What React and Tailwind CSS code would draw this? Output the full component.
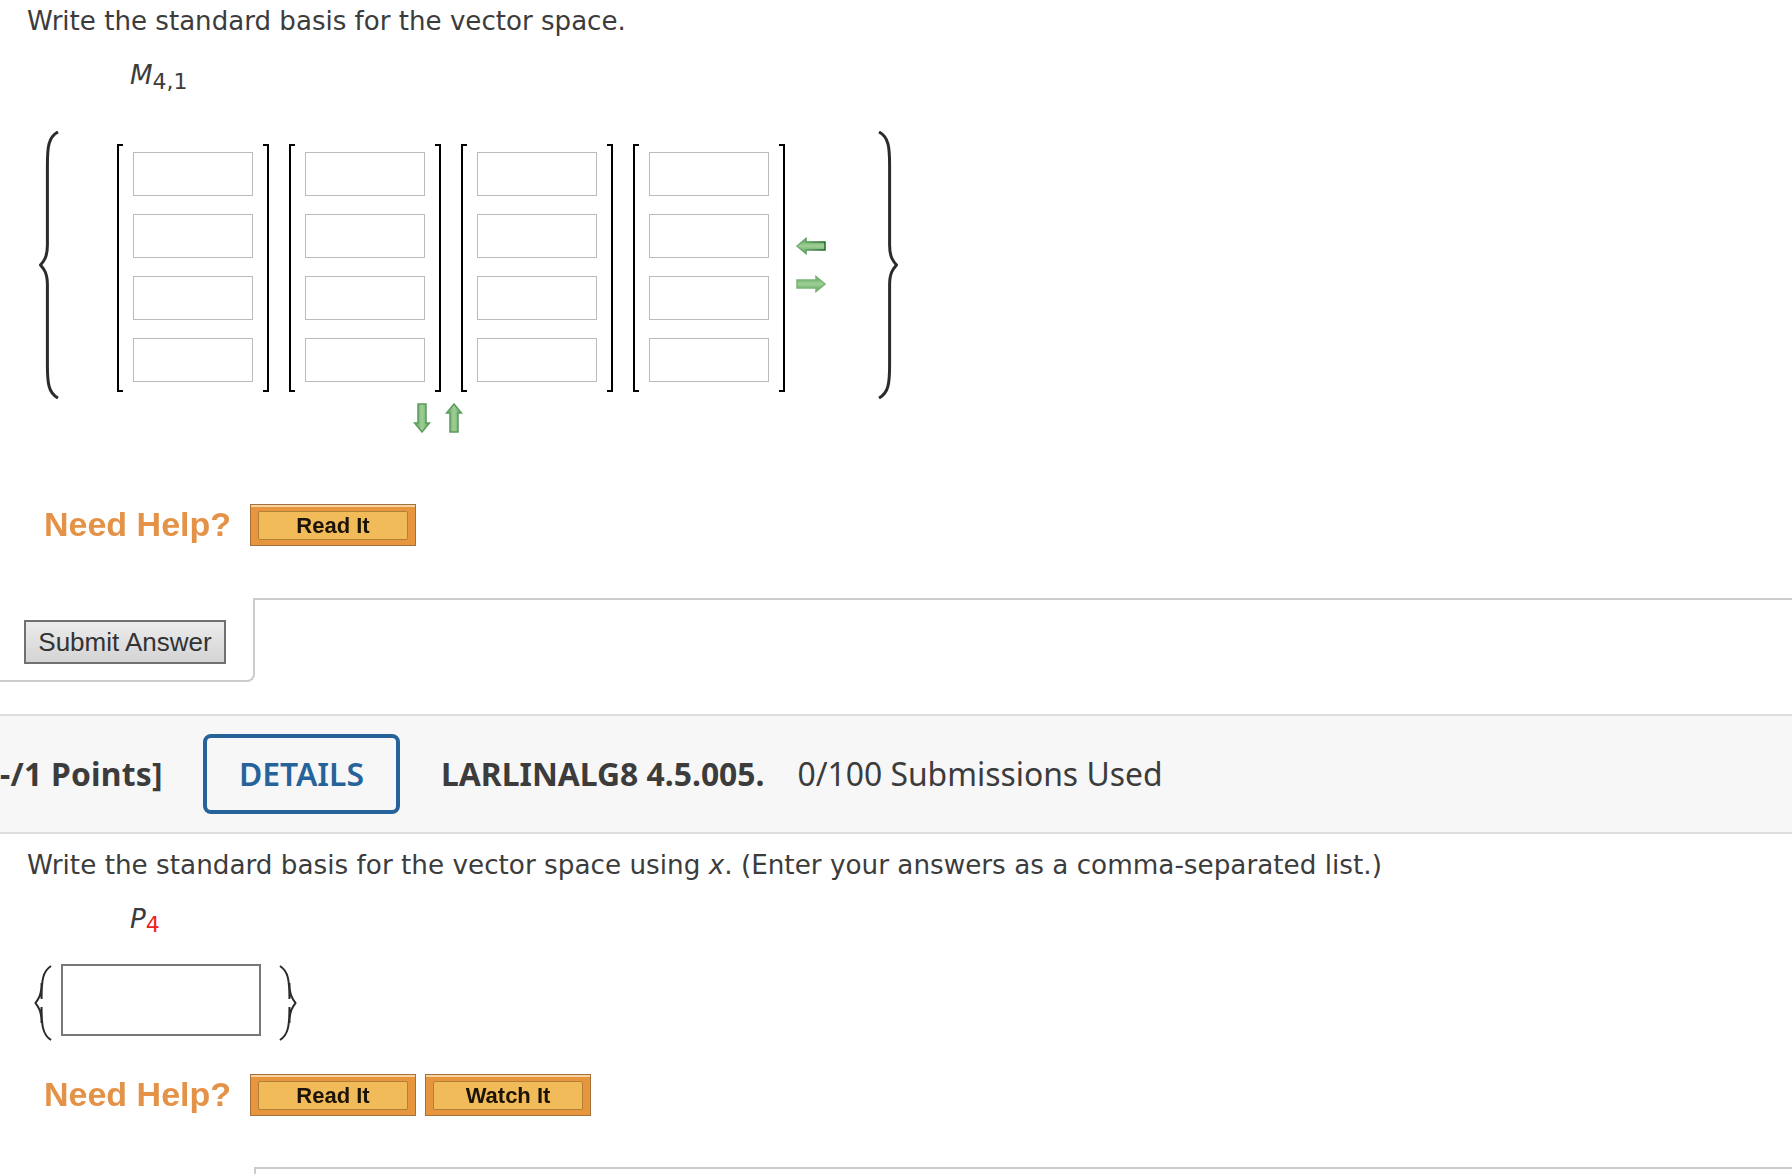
const TEXT = 'text-[#3c3c3c]'

function Brace({ side = 'left', w = 20, h = 268, sw = 3 }) {
  // drawn as a left brace, mirrored for the right one
  const mid = h / 2
  const x = w * 0.42
  const d = `M${w * 0.95} 1 C${x + 1} 6 ${x} 16 ${x} 34 L${x} ${mid - 20} C${x} ${mid - 8} ${w * 0.25} ${mid - 4} 1.5 ${mid} C${w * 0.25} ${mid + 4} ${x} ${mid + 8} ${x} ${mid + 20} L${x} ${h - 34} C${x} ${h - 16} ${x + 1} ${h - 6} ${w * 0.95} ${h - 1}`
  return (
    <svg width={w} height={h} viewBox={`0 0 ${w} ${h}`} fill="none" className={side === 'right' ? '-scale-x-100 shrink-0' : 'shrink-0'}>
      <path d={d} stroke="#2b2b2b" strokeWidth={sw} />
    </svg>
  )
}

function Matrix() {
  return (
    <div className="flex items-center w-[152px] shrink-0">
      <div className="w-[6px] h-[248px] border-l-[2px] border-y-[2px] border-black shrink-0" />
      <div className="flex flex-col gap-[18px] ml-[10px] mr-[10px] mb-[2px]">
        {[0, 1, 2, 3].map(i => (
          <div key={i} className="w-[120px] h-[44px] border border-[#bbbbbb] bg-white" />
        ))}
      </div>
      <div className="w-[6px] h-[248px] border-r-[2px] border-y-[2px] border-black shrink-0" />
    </div>
  )
}

function ArrowH({ dir }) {
  return (
    <svg width="30" height="18" viewBox="0 0 30 18" className={dir === 'left' ? 'blur-[0.4px]' : '-scale-x-100 blur-[0.4px]'}>
      <defs>
        <linearGradient id={`ah-fill-${dir}`} x1="0" y1="0" x2="0" y2="1">
          <stop offset="0" stopColor="#5fa05f" />
          <stop offset="0.5" stopColor="#9fd095" />
          <stop offset="1" stopColor="#5fa05f" />
        </linearGradient>
        <linearGradient id={`ah-line-${dir}`} x1="0" y1="0" x2="1" y2="0">
          <stop offset="0" stopColor="#78b575" />
          <stop offset="1" stopColor={dir === 'left' ? '#1f6a2c' : '#78b575'} />
        </linearGradient>
      </defs>
      <path d="M1 9 L10 1.5 L10 5 L29 5 L29 13 L10 13 L10 16.5 Z" fill={`url(#ah-fill-${dir})`} stroke={`url(#ah-line-${dir})`} strokeWidth="1.5" />
    </svg>
  )
}

function ArrowV({ dir }) {
  return (
    <svg width="18" height="30" viewBox="0 0 18 30" className={dir === 'up' ? 'blur-[0.4px]' : '-scale-y-100 blur-[0.4px]'}>
      <defs>
        <linearGradient id={`av-${dir}`} x1="0" y1="0" x2="1" y2="0">
          <stop offset="0" stopColor="#5fa05f" />
          <stop offset="0.5" stopColor="#9fd095" />
          <stop offset="1" stopColor="#5fa05f" />
        </linearGradient>
      </defs>
      <path d="M9 1 L16.5 10 L13 10 L13 29 L5 29 L5 10 L1.5 10 Z" fill={`url(#av-${dir})`} stroke="#5a9c5c" strokeWidth="1.5" />
    </svg>
  )
}

function HelpButton({ label }) {
  return (
    <div className="w-[166px] h-[42px] border border-[#a5713a] bg-[#e8963e] p-[6px_7px_5px_7px] shadow-[inset_0_2px_0_#f6d3a4]">
      <div className="h-full border border-[#b08038] rounded-[2px] bg-[#f2bb5a] flex items-center justify-center">
        <span className="font-['Liberation_Sans',sans-serif] font-bold text-[22px] text-[#1c1408] blur-[0.4px]">{label}</span>
      </div>
    </div>
  )
}

function NeedHelp({ labels }) {
  return (
    <div className="flex items-center ml-[44px]">
      <span className="font-['Liberation_Sans',sans-serif] font-bold text-[34px] leading-[42px] pb-[2px] text-[#e39247] w-[206px] blur-[0.4px]">Need Help?</span>
      <div className="flex gap-[9px]">
        {labels.map(l => <HelpButton key={l} label={l} />)}
      </div>
    </div>
  )
}

export default function App() {
  return (
    <div className={`w-[1792px] h-[1174px] overflow-hidden bg-white ${TEXT} font-['DejaVu_Sans',sans-serif]`}>
      <p className="ml-[27px] pt-[5px] text-[26.1px] leading-[32px]">Write the standard basis for the vector space.</p>

      <p className="ml-[130px] mt-[20px] h-[39px] text-[26.2px] leading-[36px]">
        <i>M</i><span className="text-[22px] align-[-5px]">4,1</span>
      </p>

      <div className="flex items-start mt-[35px]">
        <div className="ml-[39px] mr-[58px]"><Brace /></div>
        <div className="mt-[13px] flex gap-[20px]">
          <Matrix /><Matrix /><Matrix /><Matrix />
        </div>
        <div className="mt-[13px] h-[248px] ml-[11px] w-[82px] flex flex-col gap-[20px] pt-[93px]">
          <ArrowH dir="left" />
          <ArrowH dir="right" />
        </div>
        <Brace side="right" />
      </div>

      <div className="flex gap-[14px] ml-[413px] mt-[4px] h-[32px]">
        <ArrowV dir="down" />
        <ArrowV dir="up" />
      </div>

      <div className="mt-[68px]"><NeedHelp labels={['Read It']} /></div>

      {/* submit box */}
      <div className="flex mt-[51px]">
        <div className="w-[255px] h-[84px] border-r-2 border-b-2 border-[#cccccc] rounded-br-[8px] pl-[24px] pt-[22px] shrink-0">
          <div className="w-[202px] h-[44px] border-2 border-[#707070] bg-gradient-to-b from-[#ececec] to-[#d4d4d4] flex items-center justify-center font-['Liberation_Sans',sans-serif] text-[26px] text-[#333333]">
            Submit Answer
          </div>
        </div>
        <div className="flex-1 border-t-2 border-[#cccccc]" />
      </div>

      {/* question header */}
      <div className="mt-[32px] h-[120px] border-y-2 border-[#dddddd] bg-[#f7f7f7] flex items-center font-['Noto_Sans',sans-serif] text-[31.85px]">
        <span className="font-bold w-[203px] shrink-0 tracking-[0.25px]">-/1 Points]</span>
        <div className="w-[197px] h-[80px] border-[4px] border-[#26639a] rounded-[8px] flex items-center justify-center font-semibold text-[#26639a] shrink-0">DETAILS</div>
        <span className="font-bold ml-[41px]">LARLINALG8 4.5.005.</span>
        <span className="ml-[33px]">0/100 Submissions Used</span>
      </div>

      <p className="ml-[27px] mt-[15px] text-[26.25px] leading-[32px]">
        Write the standard basis for the vector space using <i>x</i>. (Enter your answers as a comma-separated list.)
      </p>

      <p className="ml-[130px] mt-[20px] h-[36px] text-[26.2px] leading-[36px]">
        <i>P</i><span className="text-[22px] align-[-4px] text-[#ee2222]">4</span>
      </p>

      <div className="flex items-start mt-[27px] ml-[34px]">
        <div className="mt-[1px]"><Brace w={18} h={76} sw={2} /></div>
        <div className="ml-[9px] w-[200px] h-[72px] border-2 border-[#777777] bg-white shrink-0" />
        <div className="ml-[18px] mt-[1px]"><Brace side="right" w={18} h={76} sw={2} /></div>
      </div>

      <div className="mt-[32px]"><NeedHelp labels={['Read It', 'Watch It']} /></div>

      <div className="ml-[254px] mt-[50px] h-[10px] border-t-2 border-l-2 border-[#cccccc]" />
    </div>
  )
}
